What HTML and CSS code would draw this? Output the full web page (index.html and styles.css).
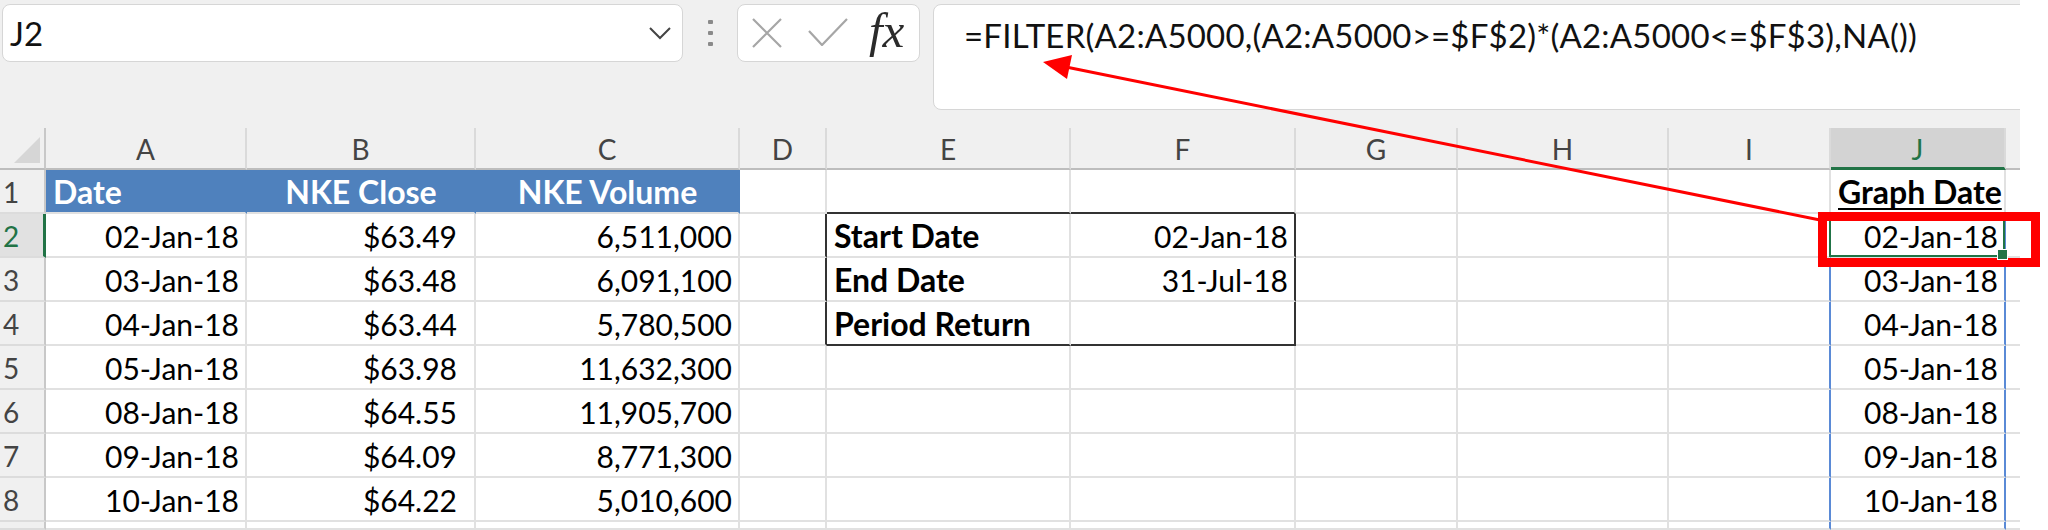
FILE: index.html
```html
<!DOCTYPE html>
<html>
<head>
<meta charset="utf-8">
<link rel="stylesheet" href="styles.css">
</head>
<body>
<div class="app">
  <div class="topbar">
    <div class="namebox">
      <span class="nb-text">J2</span>
      <svg class="chev" width="22" height="14" viewBox="0 0 22 14"><polyline points="1,2 11,12 21,2" fill="none" stroke="#444" stroke-width="2"/></svg>
    </div>
    <div class="grip"><span></span><span></span><span></span></div>
    <div class="fbuttons">
      <svg class="ico-x" width="30" height="30" viewBox="0 0 30 30"><path d="M1 1 L29 29 M29 1 L1 29" stroke="#a6a6a6" stroke-width="2.2" fill="none"/></svg>
      <svg class="ico-check" width="40" height="28" viewBox="0 0 40 28"><path d="M1 13 L14 27 L39 1" stroke="#a6a6a6" stroke-width="2.2" fill="none"/></svg>
      <span class="fx">fx</span>
    </div>
    <div class="formula">=FILTER(A2:A5000,(A2:A5000&gt;=$F$2)*(A2:A5000&lt;=$F$3),NA())</div>
  </div>

  <div class="sheet">
    <!-- header row -->
    <div class="corner"><svg width="46" height="40" viewBox="0 0 46 40"><polygon points="40,9 40,35 14,35" fill="#d6d6d6"/></svg></div>
    <div class="ch">A</div><div class="ch">B</div><div class="ch">C</div><div class="ch">D</div>
    <div class="ch">E</div><div class="ch">F</div><div class="ch">G</div><div class="ch">H</div>
    <div class="ch">I</div><div class="ch sel">J</div><div class="ch last"></div>

    <!-- row 1 -->
    <div class="rh">1</div>
    <div class="c blue b">Date</div>
    <div class="c blue b ctr">NKE Close</div>
    <div class="c blue b ctr">NKE Volume</div>
    <div class="c"></div>
    <div class="c boxtop"></div>
    <div class="c boxtop"></div>
    <div class="c"></div><div class="c"></div><div class="c"></div>
    <div class="c r b"><span class="ul">Graph Date</span></div>
    <div class="c last"></div>

    <!-- row 2 -->
    <div class="rh sel">2</div>
    <div class="c r">02-Jan-18</div>
    <div class="c r cur">$63.49</div>
    <div class="c r">6,511,000</div>
    <div class="c boxleft"></div>
    <div class="c b">Start Date</div>
    <div class="c r boxright">02-Jan-18</div>
    <div class="c"></div><div class="c"></div>
    <div class="c spill-l"></div>
    <div class="c r spill active">02-Jan-18</div>
    <div class="c last"></div>

    <!-- row 3 -->
    <div class="rh">3</div>
    <div class="c r">03-Jan-18</div>
    <div class="c r cur">$63.48</div>
    <div class="c r">6,091,100</div>
    <div class="c boxleft"></div>
    <div class="c b">End Date</div>
    <div class="c r boxright">31-Jul-18</div>
    <div class="c"></div><div class="c"></div>
    <div class="c spill-l"></div>
    <div class="c r spill">03-Jan-18</div>
    <div class="c last"></div>

    <!-- row 4 -->
    <div class="rh">4</div>
    <div class="c r">04-Jan-18</div>
    <div class="c r cur">$63.44</div>
    <div class="c r">5,780,500</div>
    <div class="c boxleft"></div>
    <div class="c b boxbottom">Period Return</div>
    <div class="c r boxright boxbottom"></div>
    <div class="c"></div><div class="c"></div>
    <div class="c spill-l"></div>
    <div class="c r spill">04-Jan-18</div>
    <div class="c last"></div>

    <!-- row 5 -->
    <div class="rh">5</div>
    <div class="c r">05-Jan-18</div>
    <div class="c r cur">$63.98</div>
    <div class="c r">11,632,300</div>
    <div class="c"></div><div class="c"></div><div class="c"></div>
    <div class="c"></div><div class="c"></div>
    <div class="c spill-l"></div>
    <div class="c r spill">05-Jan-18</div>
    <div class="c last"></div>

    <!-- row 6 -->
    <div class="rh">6</div>
    <div class="c r">08-Jan-18</div>
    <div class="c r cur">$64.55</div>
    <div class="c r">11,905,700</div>
    <div class="c"></div><div class="c"></div><div class="c"></div>
    <div class="c"></div><div class="c"></div>
    <div class="c spill-l"></div>
    <div class="c r spill">08-Jan-18</div>
    <div class="c last"></div>

    <!-- row 7 -->
    <div class="rh">7</div>
    <div class="c r">09-Jan-18</div>
    <div class="c r cur">$64.09</div>
    <div class="c r">8,771,300</div>
    <div class="c"></div><div class="c"></div><div class="c"></div>
    <div class="c"></div><div class="c"></div>
    <div class="c spill-l"></div>
    <div class="c r spill">09-Jan-18</div>
    <div class="c last"></div>

    <!-- row 8 -->
    <div class="rh">8</div>
    <div class="c r">10-Jan-18</div>
    <div class="c r cur">$64.22</div>
    <div class="c r">5,010,600</div>
    <div class="c"></div><div class="c"></div><div class="c"></div>
    <div class="c"></div><div class="c"></div>
    <div class="c spill-l"></div>
    <div class="c r spill">10-Jan-18</div>
    <div class="c last"></div>

    <!-- row 9 (partial) -->
    <div class="rh"></div>
    <div class="c"></div><div class="c"></div><div class="c"></div><div class="c"></div>
    <div class="c"></div><div class="c"></div><div class="c"></div><div class="c"></div>
    <div class="c spill-l"></div>
    <div class="c spill"></div>
    <div class="c last"></div>
  </div>
</div>

<svg class="annot" width="2048" height="530" viewBox="0 0 2048 530">
  <line x1="1820" y1="220" x2="1066" y2="67" stroke="#ff0000" stroke-width="3"/>
  <polygon points="1043,62 1072,55 1067,79" fill="#ff0000"/>
  <rect x="1822.5" y="216.5" width="213" height="46" fill="none" stroke="#ff0000" stroke-width="9"/>
</svg>
</body>
</html>
```

FILE: styles.css
```css
* { box-sizing: border-box; }

html, body {
  margin: 0;
  padding: 0;
  background: #ffffff;
}

body {
  width: 2048px;
  height: 530px;
  overflow: hidden;
  position: relative;
  font-family: Lato, "Open Sans", "Liberation Sans", sans-serif;
  color: #000;
}

.app {
  width: 2020px;
  height: 530px;
  overflow: hidden;
  background: #f0f0f0;
}

/* ---------- top bar ---------- */
.topbar {
  display: flex;
  align-items: flex-start;
  height: 128px;
  padding: 4px 0 0 2px;
}

.namebox {
  width: 681px;
  height: 58px;
  background: #fff;
  border: 1px solid #d6d6d6;
  border-radius: 8px;
  display: flex;
  align-items: center;
  justify-content: space-between;
  padding: 0 11px 0 7px;
}

.nb-text {
  font-size: 33px;
  color: #111;
}

.chev { display: block; }

.grip {
  width: 54px;
  display: flex;
  flex-direction: column;
  align-items: center;
  gap: 7px;
  padding-top: 16px;
}

.grip span {
  width: 5px;
  height: 4px;
  background: #8a8a8a;
  border-radius: 1px;
}

.fbuttons {
  width: 183px;
  height: 58px;
  background: #fff;
  border: 1px solid #d6d6d6;
  border-radius: 8px;
  display: flex;
  align-items: center;
  padding-left: 14px;
}

.ico-x { display: block; margin-top: -1px; }
.ico-check { display: block; margin-left: 26px; margin-top: -2px; }

.fx {
  margin-left: 21px;
  font-family: "Liberation Serif", "DejaVu Serif", serif;
  font-style: italic;
  font-size: 49px;
  line-height: 1;
  color: #2b2b2b;
  margin-top: -6px;
}

.formula {
  flex: 1;
  margin-left: 13px;
  margin-right: -20px;
  height: 106px;
  background: #fff;
  border: 1px solid #d6d6d6;
  border-radius: 8px;
  padding: 10px 0 0 30px;
  font-size: 33px;
  letter-spacing: 0.2px;
  line-height: 40px;
  color: #111;
  white-space: nowrap;
}

/* ---------- sheet grid ---------- */
.sheet {
  display: grid;
  grid-template-columns: 46px 201px 229px 264px 87px 244px 225px 162px 211px 162px 175px 14px;
  grid-template-rows: 42px repeat(8, 44px) 8px;
}

.corner {
  border-right: 2px solid #c8c8c8;
  border-bottom: 2px solid #bdbdbd;
}
.corner svg { display: block; }

.ch {
  border-right: 2px solid #dadada;
  border-bottom: 2px solid #bdbdbd;
  text-align: center;
  font-size: 28px;
  line-height: 42px;
  color: #444;
}
.ch.sel {
  background: #d3d3d3;
  color: #217346;
  border-bottom: 3px solid #217346;
}
.ch.last { border-right: none; }

.rh {
  background: #f0f0f0;
  border-right: 2px solid #c8c8c8;
  border-bottom: 2px solid #dcdcdc;
  font-size: 28px;
  line-height: 44px;
  padding-left: 3px;
  color: #444;
}
.rh.sel {
  background: #e1e1e1;
  color: #217346;
  border-right: 3px solid #217346;
}

.c {
  background: #fff;
  border-right: 2px solid #e1e1e1;
  border-bottom: 2px solid #e1e1e1;
  font-size: 30px;
  line-height: 40px;
  padding: 2px 6px 0 7px;
  white-space: nowrap;
  position: relative;
}
.c.last { border-right: none; }

.r { text-align: right; }
.ctr { text-align: center; }
.b { font-weight: 700; font-size: 32px; }

.blue {
  background: #4f81bd;
  color: #fff;
  border-right-color: #4f81bd;
}

.cur { padding-right: 17px; }

.ul {
  text-decoration: underline;
  text-decoration-thickness: 2px;
  text-underline-offset: 4px;
  text-decoration-skip-ink: none;
}

/* summary box E2:F4 */
.boxtop { border-bottom-color: #333; }
.boxleft { border-right-color: #333; }
.boxright { border-right-color: #333; }
.boxbottom { border-bottom-color: #333; }

/* spill range border in J */
.spill-l { border-right-color: #5a8ad6; }
.spill { border-right-color: #5a8ad6; }

/* active cell */
.active::after {
  content: "";
  position: absolute;
  left: -2px;
  top: -2px;
  right: -1px;
  bottom: -1px;
  border: 2px solid #217346;
}
.active::before {
  content: "";
  position: absolute;
  right: -4px;
  bottom: -4px;
  width: 9px;
  height: 9px;
  background: #217346;
  border: 1px solid #fff;
  z-index: 2;
}

/* annotation overlay */
.annot {
  position: absolute;
  left: 0;
  top: 0;
  pointer-events: none;
}
```
